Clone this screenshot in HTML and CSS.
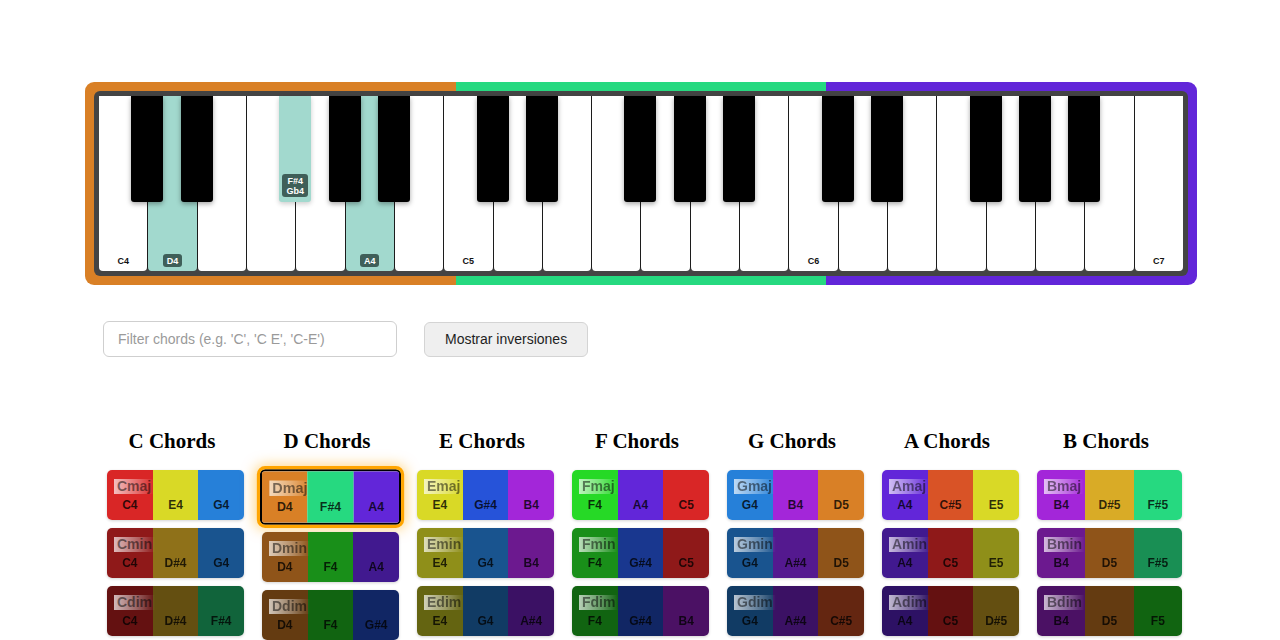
FILE: index.html
```html
<!DOCTYPE html>
<html lang="en">
<head>
<meta charset="utf-8">
<title>Chord Piano</title>
<link rel="stylesheet" href="styles.css">
</head>
<body>
<main class="app">
  <div class="piano-frame">
    <div class="piano-inner">
      <div class="keys">
        <div class="white"><span class="lbl">C4</span><div class="black"></div></div>
        <div class="white on"><span class="lbl badge">D4</span><div class="black"></div></div>
        <div class="white"></div>
        <div class="white"><div class="black on"><span class="lbl badge">F#4<br>Gb4</span></div></div>
        <div class="white"><div class="black"></div></div>
        <div class="white on"><span class="lbl badge">A4</span><div class="black"></div></div>
        <div class="white"></div>
        <div class="white"><span class="lbl">C5</span><div class="black"></div></div>
        <div class="white"><div class="black"></div></div>
        <div class="white"></div>
        <div class="white"><div class="black"></div></div>
        <div class="white"><div class="black"></div></div>
        <div class="white"><div class="black"></div></div>
        <div class="white"></div>
        <div class="white"><span class="lbl">C6</span><div class="black"></div></div>
        <div class="white"><div class="black"></div></div>
        <div class="white"></div>
        <div class="white"><div class="black"></div></div>
        <div class="white"><div class="black"></div></div>
        <div class="white"><div class="black"></div></div>
        <div class="white"></div>
        <div class="white"><span class="lbl">C7</span></div>
      </div>
    </div>
  </div>

  <div class="controls">
    <input class="filter" type="text" placeholder="Filter chords (e.g. 'C', 'C E', 'C-E')">
    <button class="btn" type="button">Mostrar inversiones</button>
  </div>

  <section class="chords">
    <div class="col">
      <h2>C Chords</h2>
      <div class="card maj"><span class="name">Cmaj</span><div class="cell c-C">C4</div><div class="cell c-E">E4</div><div class="cell c-G">G4</div></div>
      <div class="card min"><span class="name">Cmin</span><div class="cell c-C">C4</div><div class="cell c-Ds">D#4</div><div class="cell c-G">G4</div></div>
      <div class="card dim"><span class="name">Cdim</span><div class="cell c-C">C4</div><div class="cell c-Ds">D#4</div><div class="cell c-Fs">F#4</div></div>
    </div>
    <div class="col">
      <h2>D Chords</h2>
      <div class="card maj sel"><span class="name">Dmaj</span><div class="cell c-D">D4</div><div class="cell c-Fs">F#4</div><div class="cell c-A">A4</div></div>
      <div class="card min"><span class="name">Dmin</span><div class="cell c-D">D4</div><div class="cell c-F">F4</div><div class="cell c-A">A4</div></div>
      <div class="card dim"><span class="name">Ddim</span><div class="cell c-D">D4</div><div class="cell c-F">F4</div><div class="cell c-Gs">G#4</div></div>
    </div>
    <div class="col">
      <h2>E Chords</h2>
      <div class="card maj"><span class="name">Emaj</span><div class="cell c-E">E4</div><div class="cell c-Gs">G#4</div><div class="cell c-B">B4</div></div>
      <div class="card min"><span class="name">Emin</span><div class="cell c-E">E4</div><div class="cell c-G">G4</div><div class="cell c-B">B4</div></div>
      <div class="card dim"><span class="name">Edim</span><div class="cell c-E">E4</div><div class="cell c-G">G4</div><div class="cell c-As">A#4</div></div>
    </div>
    <div class="col">
      <h2>F Chords</h2>
      <div class="card maj"><span class="name">Fmaj</span><div class="cell c-F">F4</div><div class="cell c-A">A4</div><div class="cell c-C">C5</div></div>
      <div class="card min"><span class="name">Fmin</span><div class="cell c-F">F4</div><div class="cell c-Gs">G#4</div><div class="cell c-C">C5</div></div>
      <div class="card dim"><span class="name">Fdim</span><div class="cell c-F">F4</div><div class="cell c-Gs">G#4</div><div class="cell c-B">B4</div></div>
    </div>
    <div class="col">
      <h2>G Chords</h2>
      <div class="card maj"><span class="name">Gmaj</span><div class="cell c-G">G4</div><div class="cell c-B">B4</div><div class="cell c-D">D5</div></div>
      <div class="card min"><span class="name">Gmin</span><div class="cell c-G">G4</div><div class="cell c-As">A#4</div><div class="cell c-D">D5</div></div>
      <div class="card dim"><span class="name">Gdim</span><div class="cell c-G">G4</div><div class="cell c-As">A#4</div><div class="cell c-Cs">C#5</div></div>
    </div>
    <div class="col">
      <h2>A Chords</h2>
      <div class="card maj"><span class="name">Amaj</span><div class="cell c-A">A4</div><div class="cell c-Cs">C#5</div><div class="cell c-E">E5</div></div>
      <div class="card min"><span class="name">Amin</span><div class="cell c-A">A4</div><div class="cell c-C">C5</div><div class="cell c-E">E5</div></div>
      <div class="card dim"><span class="name">Adim</span><div class="cell c-A">A4</div><div class="cell c-C">C5</div><div class="cell c-Ds">D#5</div></div>
    </div>
    <div class="col wide">
      <h2>B Chords</h2>
      <div class="card maj"><span class="name">Bmaj</span><div class="cell c-B">B4</div><div class="cell c-Ds">D#5</div><div class="cell c-Fs">F#5</div></div>
      <div class="card min"><span class="name">Bmin</span><div class="cell c-B">B4</div><div class="cell c-D">D5</div><div class="cell c-Fs">F#5</div></div>
      <div class="card dim"><span class="name">Bdim</span><div class="cell c-B">B4</div><div class="cell c-D">D5</div><div class="cell c-F">F5</div></div>
    </div>
  </section>
</main>
</body>
</html>
```

FILE: styles.css
```css
* { box-sizing: border-box; }

html, body {
  margin: 0;
  padding: 0;
  background: #fff;
  font-family: "Liberation Sans", Arial, sans-serif;
  overflow: hidden;
}

.app {
  width: 1112px;
  margin-left: calc(50% - 555px);
  padding-top: 82px;
}

/* ---------- Piano ---------- */
.piano-frame {
  padding: 9px;
  border-radius: 9px;
  background: linear-gradient(90deg,
    #d98026 0, #d98026 33.333%,
    #26d980 33.333%, #26d980 66.667%,
    #6226d9 66.667%, #6226d9 100%);
}

.piano-inner {
  padding: 5px;
  background: #444;
  border-radius: 6px;
}

.keys {
  display: flex;
  height: 175px;
}

.white {
  flex: 1 1 0;
  min-width: 0;
  position: relative;
  background: #fff;
  border-left: 1px solid #1c1c1c;
  border-radius: 0 0 4px 4px;
  display: flex;
  align-items: flex-end;
  justify-content: center;
  padding-bottom: 4px;
}
.white:first-child { border-left: none; }
.white.on { background: #a2d9ce; }

.black {
  position: absolute;
  top: 0;
  right: -16px;
  width: 32px;
  height: 106px;
  background: #000;
  border-radius: 0 0 3px 3px;
  box-shadow: 0 2px 5px rgba(0, 0, 0, 0.35);
  z-index: 2;
}
.black.on {
  background: #a2d9ce;
  display: flex;
  align-items: flex-end;
  justify-content: center;
  padding-bottom: 5px;
  box-shadow: 0 2px 5px rgba(0, 0, 0, 0.2);
}

.lbl {
  font-size: 9px;
  line-height: 10px;
  font-weight: bold;
  color: #111;
  padding: 1.5px 4px;
  text-align: center;
  border-radius: 3px;
}
.lbl.badge {
  background: #3f5f59;
  color: #fff;
}

/* ---------- Controls ---------- */
.controls {
  margin-top: 36px;
  padding-left: 18px;
  display: flex;
  align-items: center;
  gap: 27px;
}

.filter {
  width: 294px;
  height: 36px;
  border: 1px solid #cfcfcf;
  border-radius: 6px;
  padding: 0 14px;
  font-family: "Liberation Sans", Arial, sans-serif;
  font-size: 14px;
  color: #222;
  background: #fff;
  outline: none;
}
.filter::placeholder { color: #9a9a9a; }

.btn {
  height: 35px;
  padding: 0 20px;
  border: 1px solid #d4d4d4;
  border-radius: 6px;
  background: #efefef;
  font-family: "Liberation Sans", Arial, sans-serif;
  font-size: 14px;
  color: #1e1e1e;
}

/* ---------- Chords ---------- */
.chords {
  margin-top: 72px;
  padding-left: 22px;
  display: flex;
  gap: 18px;
  align-items: flex-start;
}

.col {
  width: 137px;
  display: flex;
  flex-direction: column;
}
.col.wide { width: 145px; }

.col h2 {
  margin: 0 0 17px;
  padding-right: 7px;
  font-family: "Liberation Serif", "Times New Roman", serif;
  font-size: 21px;
  line-height: 24px;
  font-weight: bold;
  text-align: center;
  color: #000;
}

.card {
  position: relative;
  display: flex;
  height: 50px;
  border-radius: 5px;
  overflow: hidden;
  box-shadow: 0 1px 3px rgba(0, 0, 0, 0.18);
}
.card + .card { margin-top: 8px; }

.card.sel {
  box-sizing: content-box;
  border: 2px solid #000;
  transform: scale(1.03);
  outline: 3px solid #ffa500;
  box-shadow: 0 0 12px 4px rgba(255, 170, 0, 0.5), inset 0 0 6px rgba(0, 0, 0, 0.25);
}

.name {
  position: absolute;
  z-index: 1;
  top: 9px;
  left: 7px;
  padding: 0 3px;
  font-size: 14px;
  line-height: 15px;
  font-weight: bold;
  color: rgba(0, 0, 0, 0.5);
  background: linear-gradient(90deg, rgba(255, 255, 255, 0.7) 0%, rgba(255, 255, 255, 0.35) 55%, rgba(255, 255, 255, 0) 100%);
}

.cell {
  flex: 1 1 0;
  min-width: 0;
  display: flex;
  align-items: flex-end;
  justify-content: center;
  padding-bottom: 8px;
  font-size: 12px;
  line-height: 14px;
  font-weight: bold;
  color: rgba(0, 0, 0, 0.78);
}

.card.min .cell { filter: brightness(0.66); }
.card.dim .cell { filter: brightness(0.46); }

.c-C  { background: #d92626; }
.c-Cs { background: #d95326; }
.c-D  { background: #d98026; }
.c-Ds { background: #d9ab26; }
.c-E  { background: #d9d926; }
.c-F  { background: #26d926; }
.c-Fs { background: #26d980; }
.c-G  { background: #2680d9; }
.c-Gs { background: #2653d9; }
.c-A  { background: #6226d9; }
.c-As { background: #8026d9; }
.c-B  { background: #a326d9; }
```
